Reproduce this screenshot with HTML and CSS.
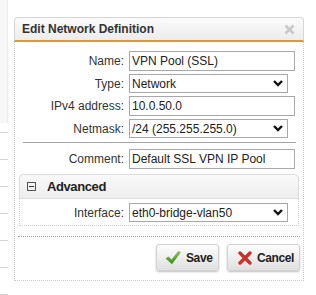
FILE: index.html
```html
<!DOCTYPE html>
<html lang="en">

<head>
    <meta charset="UTF-8">
    <meta name="viewport" content="width=device-width, initial-scale=1.0">
    <title>Edit Network Definition</title>
    <link rel="stylesheet" href="styles.css">
</head>

<body>
    <div class="page">
        <div class="backdrop">
            <div class="backdrop-panel"></div>
            <div class="backdrop-rows">
                <span></span><span></span><span></span><span></span><span></span><span></span><span></span>
            </div>
        </div>

        <div class="dialog">
            <div class="dialog-head">
                <h1>Edit Network Definition</h1>
                <span class="close">
                    <svg width="11" height="11" viewBox="0 0 11 11">
                        <path d="M1.5 1.5 L9.5 9.5 M9.5 1.5 L1.5 9.5" stroke="#c9c9c9" stroke-width="2.6" />
                    </svg>
                </span>
            </div>

            <div class="dialog-body">
                <form class="fields">
                    <label>Name:</label>
                    <input type="text" class="text-input" value="VPN Pool (SSL)">

                    <label>Type:</label>
                    <div class="select">
                        <span>Network</span>
                        <svg width="10" height="7" viewBox="0 0 10 7"><path d="M1 1 L5 5 L9 1" fill="none" stroke="#111" stroke-width="2.4" /></svg>
                    </div>

                    <label>IPv4 address:</label>
                    <input type="text" class="text-input" value="10.0.50.0">

                    <label>Netmask:</label>
                    <div class="select">
                        <span>/24 (255.255.255.0)</span>
                        <svg width="10" height="7" viewBox="0 0 10 7"><path d="M1 1 L5 5 L9 1" fill="none" stroke="#111" stroke-width="2.4" /></svg>
                    </div>
                </form>

                <hr class="rule">

                <div class="fields comment-row">
                    <label>Comment:</label>
                    <input type="text" class="text-input" value="Default SSL VPN IP Pool">
                </div>

                <div class="advanced">
                    <div class="advanced-head">
                        <span class="toggle"></span>
                        <span class="advanced-title">Advanced</span>
                    </div>
                    <div class="advanced-body fields">
                        <label>Interface:</label>
                        <div class="select">
                            <span>eth0-bridge-vlan50</span>
                            <svg width="10" height="7" viewBox="0 0 10 7"><path d="M1 1 L5 5 L9 1" fill="none" stroke="#111" stroke-width="2.4" /></svg>
                        </div>
                    </div>
                </div>

                <div class="actions">
                    <button type="button" class="btn btn-save">
                        <svg width="16" height="15" viewBox="0 0 16 15">
                            <defs>
                                <linearGradient id="g" x1="0" y1="0" x2="0" y2="1">
                                    <stop offset="0" stop-color="#8cc65a" />
                                    <stop offset="1" stop-color="#3f8a25" />
                                </linearGradient>
                            </defs>
                            <path d="M0.5 8.5 L3.5 6.5 L6.5 9.5 L13.5 0.8 L15.8 2.6 L7 14.2 Z" fill="url(#g)" />
                        </svg>
                        Save
                    </button>
                    <button type="button" class="btn btn-cancel">
                        <svg width="14" height="14" viewBox="0 0 14 14">
                            <path d="M2 2 L12 12 M12 2 L2 12" stroke="#c8312b" stroke-width="3.4" stroke-linecap="round" />
                        </svg>
                        Cancel
                    </button>
                </div>
            </div>
        </div>
    </div>
</body>

</html>
```

FILE: styles.css
```css
body {
    margin: 0;
    background-color: white;
    font-family: "Liberation Sans", Arial, sans-serif;
    font-size: 12px;
    color: #222;
}

.page {
    display: flex;
    align-items: flex-start;
}

/* the page behind the dialog */
.backdrop {
    width: 8px;
    flex-shrink: 0;
}

.backdrop-panel {
    height: 123px;
    background-color: #f7f7f7;
    border-right: 1px solid #ececec;
}

.backdrop-rows {
    display: flex;
    flex-direction: column;
    gap: 26px;
    padding-top: 9px;
}

.backdrop-rows span {
    height: 0;
    border-top: 1px solid #d4d4d4;
}

.dialog {
    margin: 17px 0 0 6px;
    width: 290px;
}

.dialog-head {
    height: 22px;
    display: flex;
    align-items: center;
    justify-content: space-between;
    padding: 0 8px 0 7px;
    background: linear-gradient(#fbfbfb, #ececec);
    border: 1px solid #d6d6d6;
    border-bottom: 2px solid #dc993d;
    border-radius: 4px 4px 0 0;
}

.dialog-head h1 {
    margin: 0;
    font-size: 12px;
    font-weight: bold;
    color: #333;
}

.close {
    display: flex;
    margin-top: 1px;
}

.dialog-body {
    border: 1px dotted #c8c8c8;
    border-top: none;
    padding: 9px 4px 9px 4px;
}

.fields {
    display: grid;
    grid-template-columns: 105px 166px;
    column-gap: 5px;
    row-gap: 3px;
    align-items: center;
}

.fields label {
    text-align: right;
    color: #333;
}

.text-input {
    height: 20px;
    box-sizing: border-box;
    margin: 0;
    padding: 0 2px;
    border: 1px solid #a8a8a8;
    font-family: "Liberation Sans", Arial, sans-serif;
    font-size: 12px;
    color: #222;
    outline: none;
}

.select {
    width: 159px;
    height: 19px;
    box-sizing: border-box;
    border: 1px solid #a8a8a8;
    display: flex;
    align-items: center;
    justify-content: space-between;
    padding: 0 4px 0 2px;
    background-color: white;
}

.rule {
    border: 0;
    border-top: 1px solid #a4a4a4;
    margin: 4px 3px 0 4px;
}

.comment-row {
    margin-top: 6px;
}

.advanced {
    margin-top: 5px;
}

.advanced-head {
    height: 23px;
    display: flex;
    align-items: center;
    gap: 11px;
    padding-left: 7px;
    background: linear-gradient(#f9f9f9, #eeeeee);
    border: 1px solid #dcdcdc;
    border-radius: 4px 4px 0 0;
}

.toggle {
    width: 7px;
    height: 7px;
    border: 1px solid #555;
    position: relative;
}

.toggle::after {
    content: "";
    position: absolute;
    left: 1px;
    right: 1px;
    top: 3px;
    height: 1px;
    background-color: #333;
}

.advanced-title {
    font-size: 13px;
    font-weight: bold;
    letter-spacing: -0.4px;
    color: #222;
}

.advanced-body {
    grid-template-columns: 104px 159px;
    padding: 4px 0 3px 0;
    border: 1px dotted #cfcfcf;
    border-top: none;
}

.actions {
    display: flex;
    justify-content: flex-end;
    gap: 8px;
    margin: 10px -1px 0 -1px;
    padding-top: 7px;
    border-top: 1px dotted #9a9a9a;
}

.btn {
    height: 27px;
    display: flex;
    align-items: center;
    gap: 5px;
    border: 1px solid #d2d2d2;
    border-radius: 3px;
    background: linear-gradient(#fdfdfd, #e0e0e0);
    box-shadow: 0 1px 2px rgba(0, 0, 0, 0.25);
    font-family: "Liberation Sans", Arial, sans-serif;
    font-size: 12px;
    font-weight: bold;
    letter-spacing: -0.4px;
    color: #222;
    margin: 0;
}

.btn-save {
    width: 63px;
    padding: 0 0 0 8px;
}

.btn-cancel {
    width: 73px;
    padding: 0 0 0 10px;
}
```
